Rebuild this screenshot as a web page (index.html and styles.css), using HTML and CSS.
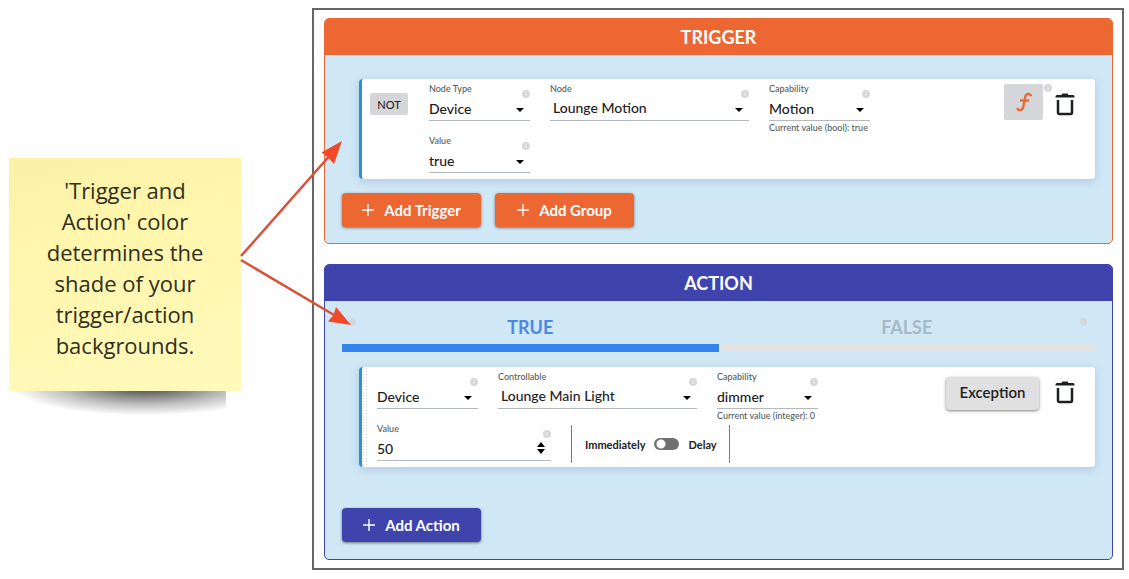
FILE: index.html
```
<!DOCTYPE html>
<html lang="en">
<head>
  <meta charset="UTF-8" />
  <meta name="viewport" content="width=device-width, initial-scale=1.0"/>
  <title>Trigger and Action</title>
  <link rel="stylesheet" href="styles.css">
</head>
<body>
  <!-- shared icons -->
  <svg class="sprite" aria-hidden="true">
    <symbol id="info" viewBox="0 0 8 8">
      <circle cx="4" cy="4" r="4" fill="#d6d7d9"/>
      <path d="M4 3.5v2.3M4 1.8v.9" stroke="#f4f4f5" stroke-width="1"/>
    </symbol>
    <symbol id="trash" viewBox="0 0 20 23">
      <path d="M.5 4.500V3.500Q.5 2 2 2H6.500L7.500.5h5l1 1.500H18q1.500 0 1.500 1.500v1z" fill="#1e2022"/>
      <path d="M3 7v12.500q0 1.500 1.500 1.500h11q1.500 0 1.500-1.500V7" fill="none" stroke="#1e2022" stroke-width="2.500"/>
    </symbol>
    <symbol id="plus" viewBox="0 0 12 12">
      <path d="M6 0v12M0 6h12" stroke="#fff" stroke-width="1.400"/>
    </symbol>
  </svg>

  <div class="note">'Trigger and Action' color determines the shade of your trigger/action backgrounds.</div>

  <main class="frame">
    <section class="panel trigger">
      <h2>TRIGGER</h2>
      <div class="panel-body">
        <div class="card">
          <button class="not-btn">NOT</button>
          <div class="fields">
            <div class="row">
              <div class="field">
                <label for="nodeType">Node Type</label>
                <select id="nodeType"><option>Device</option></select>
                <svg class="info"><use href="#info"/></svg>
              </div>
              <div class="field wide">
                <label for="node">Node</label>
                <select id="node"><option>Lounge Motion</option></select>
                <svg class="info"><use href="#info"/></svg>
              </div>
              <div class="field">
                <label for="capability">Capability</label>
                <select id="capability"><option>Motion</option></select>
                <svg class="info"><use href="#info"/></svg>
                <span class="hint">Current value (bool): true</span>
              </div>
            </div>
            <div class="row">
              <div class="field">
                <label for="value">Value</label>
                <select id="value"><option>true</option></select>
                <svg class="info"><use href="#info"/></svg>
              </div>
            </div>
          </div>
          <div class="tools">
            <button class="fn-btn" aria-label="Function">
              <svg width="16" height="20" viewBox="0 0 16 20">
                <path d="M15 4.200C14.500 1.200 10.200.8 9.300 4.500L7.400 14.500C6.600 19 2.200 19.200 1.200 16M4 8.500h9" fill="none" stroke="#ed6733" stroke-width="2.300"/>
              </svg>
              <svg class="info"><use href="#info"/></svg>
            </button>
            <button class="trash-btn" aria-label="Delete"><svg><use href="#trash"/></svg></button>
          </div>
        </div>
        <div class="buttons">
          <button class="add-btn"><svg><use href="#plus"/></svg>Add Trigger</button>
          <button class="add-btn"><svg><use href="#plus"/></svg>Add Group</button>
        </div>
      </div>
    </section>

    <section class="panel action">
      <h2>ACTION</h2>
      <div class="panel-body">
        <div class="tabs" role="tablist">
          <button class="tab active" role="tab" aria-selected="true">TRUE<span class="dot"></span></button>
          <button class="tab" role="tab" aria-selected="false">FALSE<span class="dot"></span></button>
        </div>
        <div class="card">
          <div class="drag"></div>
          <div class="fields">
            <div class="row">
              <div class="field">
                <label for="deviceType"></label>
                <select id="deviceType" aria-label="Node Type"><option>Device</option></select>
                <svg class="info"><use href="#info"/></svg>
              </div>
              <div class="field wide">
                <label for="controllable">Controllable</label>
                <select id="controllable"><option>Lounge Main Light</option></select>
                <svg class="info"><use href="#info"/></svg>
              </div>
              <div class="field">
                <label for="actionCapability">Capability</label>
                <select id="actionCapability"><option>dimmer</option></select>
                <svg class="info"><use href="#info"/></svg>
                <span class="hint">Current value (integer): 0</span>
              </div>
            </div>
            <div class="row">
              <div class="field number">
                <label for="level">Value</label>
                <input type="number" id="level" value="50" />
                <svg class="info"><use href="#info"/></svg>
              </div>
              <div class="timing">
                <label for="delay">Immediately</label>
                <input type="checkbox" id="delay" class="toggle" />
                <label for="delay">Delay</label>
              </div>
            </div>
          </div>
          <div class="tools">
            <button class="exception-btn">Exception</button>
            <button class="trash-btn" aria-label="Delete"><svg><use href="#trash"/></svg></button>
          </div>
        </div>
        <div class="buttons">
          <button class="add-btn"><svg><use href="#plus"/></svg>Add Action</button>
        </div>
      </div>
    </section>
  </main>

  <!-- arrows from the note to the panels -->
  <svg class="arrows" width="120" height="200" viewBox="240 135 120 200" aria-hidden="true">
    <path d="M241 256L332 153M241 260L334 315" fill="none" stroke="#da5038" stroke-width="2.500"/>
    <path d="M342 141L321.500 152.500L328 157.500L334 164zM351 325L328 321.500L333.500 315L336 307z" fill="#f04a28"/>
  </svg>
</body>
</html>
```
FILE: styles.css
```
* {
  box-sizing: border-box;
}

body {
  margin: 0;
  padding: 8px 5px 8px 9px;
  font-family: Lato, 'Open Sans', sans-serif;
  background-color: #fff;
  color: #1e2022;
  display: flex;
  align-items: flex-start;
  position: relative;
}

button,
select,
input {
  font-family: inherit;
  color: inherit;
  border: none;
  margin: 0;
  padding: 0;
}

button {
  cursor: pointer;
}

.sprite {
  position: absolute;
  width: 0;
  height: 0;
}

.arrows {
  position: absolute;
  left: 240px;
  top: 135px;
  pointer-events: none;
}

/* sticky note */
.note {
  position: relative;
  flex: none;
  width: 232px;
  margin: 150px 71px 0 0;
  padding: 17px 32px 30px;
  background: linear-gradient(165deg, #f9f1a8, #fff6ac 30%, #fffabb);
  font-family: 'Open Sans', sans-serif;
  font-size: 22px;
  line-height: 31px;
  text-align: center;
  color: #2f2e1e;
}

.note::after {
  content: '';
  position: absolute;
  left: 4px;
  right: 15px;
  top: 100%;
  height: 24px;
  background: radial-gradient(ellipse at 62% -20%, rgba(0, 0, 0, 0.65) 10%, rgba(0, 0, 0, 0.25) 45%, transparent 72%);
}

.frame {
  flex: 1;
  min-width: 0;
  padding: 8px 9px 8px 10px;
  border: 2px solid #666;
  display: flex;
  flex-direction: column;
  gap: 20px;
}

.panel {
  --accent: #ed6733;
  border: 1px solid var(--accent);
  border-radius: 5px;
  background-color: #d0e7f5;
  overflow: hidden;
}

.panel.action {
  --accent: #3e44ab;
}

.panel h2 {
  margin: 0;
  background-color: var(--accent);
  color: #fff;
  font-size: 18px;
  font-weight: 700;
  line-height: 36px;
  text-align: center;
}

.panel-body {
  padding: 24px 17px 16px;
}

.action .panel-body {
  padding: 0 17px 17px;
}

.card {
  display: flex;
  align-items: flex-start;
  margin-left: 17px;
  background-color: #fff;
  border-left: 3px solid #2c92cf;
  border-radius: 4px;
  box-shadow: 0 2px 8px rgba(60, 120, 150, 0.25);
}

.not-btn {
  width: 38px;
  height: 22px;
  margin: 14px 21px 0 8px;
  background-color: #d5d6d9;
  border-radius: 2px;
  font-size: 11px;
  font-weight: 500;
}

.drag {
  align-self: stretch;
  width: 7px;
  margin-right: 8px;
  background: radial-gradient(#d5d5d5 1px, transparent 1px) 0 0 / 3px 3px;
}

.fields {
  padding-top: 3px;
}

.row {
  display: flex;
  gap: 20px;
  height: 52px;
}

.row:last-child {
  height: 45px;
}

.field {
  position: relative;
  width: 101px;
}

.field.wide {
  width: 199px;
}

.field.number {
  width: 174px;
}

.field label,
.hint {
  display: block;
  height: 12px;
  font-size: 9px;
  font-weight: 500;
  line-height: 13px;
  color: #555c60;
  white-space: nowrap;
}

.field select,
.field input {
  display: block;
  width: 100%;
  height: 27px;
  padding-top: 2px;
  border-bottom: 1px solid #b4b9bd;
  border-radius: 0;
  background-color: transparent;
  font-size: 14px;
  font-weight: 500;
  appearance: none;
}

.field select {
  background: url("data:image/svg+xml,%3Csvg xmlns='http://www.w3.org/2000/svg' viewBox='0 0 8 4'%3E%3Cpath d='M0 0h8L4 4z'/%3E%3C/svg%3E") no-repeat right 6px top 14px / 8px 4px;
}

.field.wide select {
  padding: 0 0 0 3px;
}

.field.number input {
  appearance: textfield;
  background: url("data:image/svg+xml,%3Csvg xmlns='http://www.w3.org/2000/svg' viewBox='0 0 8 12'%3E%3Cpath d='M0 5h8L4 0zM0 7h8L4 12z'/%3E%3C/svg%3E") no-repeat right 6px top 8px / 8px 12px;
}

.field.number input::-webkit-inner-spin-button {
  appearance: none;
}

.info {
  position: absolute;
  right: 0;
  top: 8px;
  width: 8px;
  height: 8px;
}

.timing {
  display: flex;
  align-items: center;
  gap: 9px;
  height: 38px;
  margin-top: 3px;
  padding: 0 12px 0 13px;
  border: solid #777;
  border-width: 0 1px;
  font-size: 11px;
  font-weight: 700;
}

.toggle {
  appearance: none;
  width: 25px;
  height: 12px;
  border-radius: 6px;
  background: radial-gradient(circle at 7px 6px, #fff 4px, #707070 5px);
}

.tools {
  display: flex;
  align-items: flex-start;
  margin-left: auto;
  padding: 5px 20px 0 0;
  gap: 12px;
}

.action .tools {
  gap: 16px;
}

.fn-btn {
  position: relative;
  width: 39px;
  height: 36px;
  padding-top: 3px;
  background-color: #d5d6d9;
  border-radius: 2px;
}

.fn-btn .info {
  right: -9px;
  top: 0;
}

.trash-btn {
  height: 23px;
  margin-top: 9px;
  background: none;
}

.trash-btn svg {
  display: block;
  width: 20px;
  height: 23px;
}

.exception-btn {
  width: 93px;
  height: 33px;
  margin-top: 5px;
  padding-bottom: 4px;
  background-color: #e0e0e0;
  border-radius: 4px;
  box-shadow: 0 1px 3px rgba(0, 0, 0, 0.5);
  font-size: 15px;
  font-weight: 600;
}

.buttons {
  display: flex;
  gap: 14px;
  margin-top: 14px;
}

.action .buttons {
  margin-top: 41px;
}

.add-btn {
  display: flex;
  align-items: center;
  justify-content: center;
  gap: 10px;
  width: 139px;
  height: 34px;
  background-color: var(--accent);
  border-radius: 4px;
  box-shadow: 0 1px 3px rgba(0, 0, 0, 0.5);
  color: #fff;
  font-size: 15px;
  font-weight: 700;
}

.add-btn svg {
  width: 12px;
  height: 12px;
}

.tabs {
  display: flex;
  margin-bottom: 15px;
}

.tab {
  position: relative;
  flex: 1;
  height: 51px;
  background: none;
  border-bottom: 8px solid #e1e3e5;
  font-size: 18px;
  font-weight: 700;
  color: #a7b8c6;
  padding-top: 8px;
}

.tab.active {
  border-color: #3384ee;
  border-top-left-radius: 4px;
  color: #4a88e6;
}

.dot {
  position: absolute;
  top: 17px;
  right: 8px;
  width: 7px;
  height: 8px;
  border-radius: 50%;
  background-color: #d3d7da;
}

.tab.active .dot {
  right: auto;
  left: 7px;
}
```
